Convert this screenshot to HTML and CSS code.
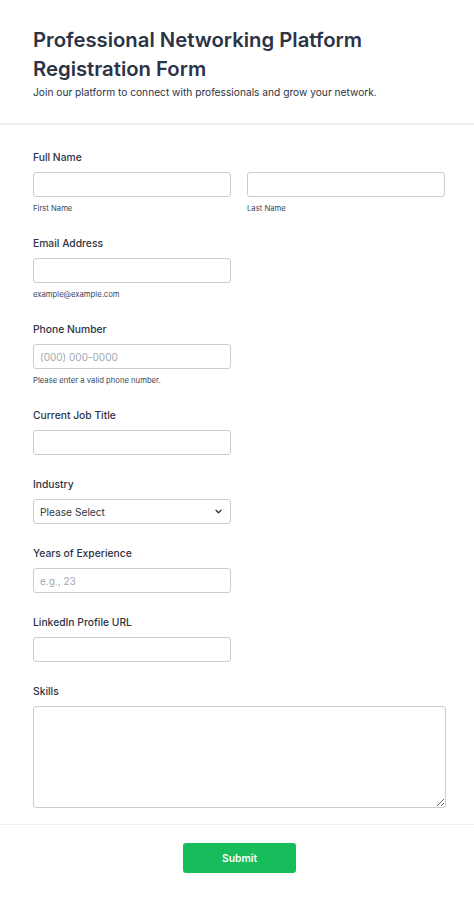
FILE: index.html
```html
<!DOCTYPE html>
<html lang="en">
<head>
<meta charset="utf-8">
<title>Professional Networking Platform Registration Form</title>
<link rel="stylesheet" href="styles.css">
</head>
<body>
<form class="form">
  <header class="form-header">
    <h1 class="form-title">Professional Networking Platform Registration Form</h1>
    <p class="form-subtitle">Join our platform to connect with professionals and grow your network.</p>
  </header>
  <div class="form-body">
    <div class="field">
      <label class="field-label">Full Name</label>
      <div class="name-row">
        <div class="name-col">
          <input class="input" type="text">
          <span class="sublabel">First Name</span>
        </div>
        <div class="name-col">
          <input class="input" type="text">
          <span class="sublabel">Last Name</span>
        </div>
      </div>
    </div>
    <div class="field">
      <label class="field-label">Email Address</label>
      <input class="input input-half" type="email">
      <span class="sublabel">example@example.com</span>
    </div>
    <div class="field">
      <label class="field-label">Phone Number</label>
      <input class="input input-half" type="tel" placeholder="(000) 000-0000">
      <span class="sublabel">Please enter a valid phone number.</span>
    </div>
    <div class="field">
      <label class="field-label">Current Job Title</label>
      <input class="input input-half" type="text">
    </div>
    <div class="field">
      <label class="field-label">Industry</label>
      <div class="select input-half">
        <span class="select-text">Please Select</span>
        <svg class="chevron" width="7" height="5" viewBox="0 0 7 5"><path d="M1 1.2 L3.5 3.7 L6 1.2" fill="none" stroke="#2c3345" stroke-width="1.3" stroke-linecap="round" stroke-linejoin="round"/></svg>
      </div>
    </div>
    <div class="field">
      <label class="field-label">Years of Experience</label>
      <input class="input input-half" type="text" placeholder="e.g., 23">
    </div>
    <div class="field">
      <label class="field-label">LinkedIn Profile URL</label>
      <input class="input input-half" type="text">
    </div>
    <div class="field field-last">
      <label class="field-label">Skills</label>
      <textarea class="textarea"></textarea>
    </div>
  </div>
  <footer class="form-footer">
    <button class="submit" type="button">Submit</button>
  </footer>
</form>
</body>
</html>
```

FILE: styles.css
```css
* { box-sizing: border-box; }
html, body { margin: 0; padding: 0; background: #ffffff; }
body {
  font-family: Inter, "Noto Sans", "Liberation Sans", sans-serif;
  color: #2c3345;
}
.form { width: 474px; }
.form-header {
  padding: 25px 33px 23px;
  border-bottom: 2px solid #efeff0;
}
.form-title {
  margin: 0;
  font-size: 20.3px;
  line-height: 29px;
  font-weight: 600;
  color: #2c3345;
}
.form-subtitle {
  margin: 1px 0 0;
  font-size: 10.2px;
  line-height: 16px;
  color: #2c3345;
}
.form-body {
  padding: 24px 29px 16px 33px;
}
.field {
  display: flex;
  flex-direction: column;
  margin-bottom: 21px;
}
.field-last { margin-bottom: 0; }
.field-label {
  font-size: 10.3px;
  line-height: 16px;
  font-weight: 500;
  margin-bottom: 7px;
  color: #2c3345;
}
.name-row {
  display: flex;
  gap: 16px;
}
.name-col {
  flex: 1;
  display: flex;
  flex-direction: column;
}
.input {
  height: 25px;
  width: 100%;
  border: 1px solid #c8ccd4;
  border-radius: 3px;
  padding: 0 6px;
  font-family: inherit;
  font-size: 10px;
  color: #2c3345;
  background: #fff;
  outline: none;
}
.input::placeholder { color: #a0a7b5; }
.input-half { width: 198px; }
.sublabel {
  margin-top: 6px;
  font-size: 7.7px;
  line-height: 12px;
  color: #3c4658;
  margin-bottom: -1px;
}
.select {
  height: 25px;
  border: 1px solid #c8ccd4;
  border-radius: 3px;
  padding: 0 8px 0 6px;
  display: flex;
  align-items: center;
  justify-content: space-between;
}
.select-text {
  font-size: 10.2px;
  color: #2c3345;
}
.chevron { display: block; }
.textarea {
  width: 413px;
  height: 102px;
  border: 1px solid #c8ccd4;
  border-radius: 3px;
  font-family: inherit;
  resize: vertical;
  outline: none;
  display: block;
}
.form-footer {
  border-top: 1px solid #efeff0;
  padding: 18px 0 26px 5px;
  display: flex;
  justify-content: center;
}
.submit {
  width: 113px;
  height: 30px;
  border: none;
  border-radius: 3px;
  background: #18bd5b;
  color: #ffffff;
  font-family: inherit;
  font-size: 10.3px;
  font-weight: 600;
  cursor: pointer;
}
```
